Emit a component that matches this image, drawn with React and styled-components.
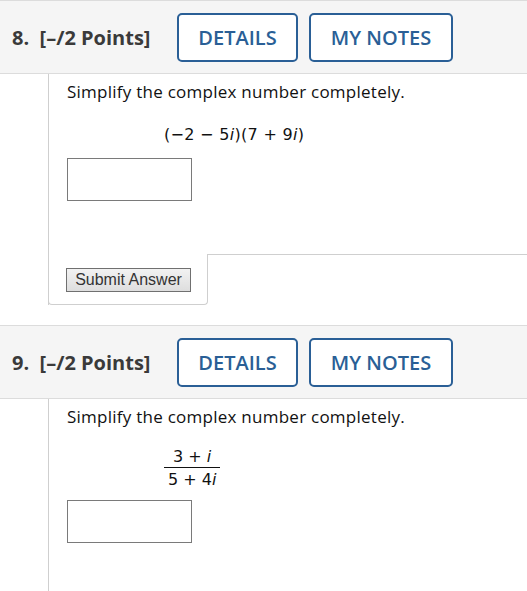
import React from 'react';
import styled, { createGlobalStyle } from 'styled-components';

const GlobalStyle = createGlobalStyle`
  body {
    margin: 0;
    background: #fff;
    font-family: "Open Sans", "Liberation Sans", sans-serif;
    overflow: hidden;
  }
`;

const Page = styled.div`
  width: 527px;
`;

const Question = styled.section`
  margin-bottom: 20px;
`;

const Header = styled.div`
  display: flex;
  align-items: center;
  height: 72px;
  padding-left: 12px;
  background: #f5f5f5;
  border-top: 1px solid #dcdcdc;
  border-bottom: 1px solid #dcdcdc;
`;

const Title = styled.h2`
  width: 165px;
  margin: 0;
  font-size: 20px;
  font-weight: 700;
  color: #3a3a3a;
  white-space: pre;
`;

const HeaderButton = styled.button`
  box-sizing: border-box;
  height: 49px;
  width: ${(props) => props.width}px;
  margin-right: 11px;
  padding: 0;
  background: #fff;
  border: 2px solid #2a5f96;
  border-radius: 5px;
  font-family: "Open Sans", sans-serif;
  font-size: 20px;
  font-weight: 600;
  color: #2a5f96;
`;

const Body = styled.div`
  margin-left: 48px;
  border-left: 1px solid #cfcfcf;
`;

const Content = styled.div`
  padding: 6px 0 0 18px;
`;

const Prompt = styled.p`
  margin: 0;
  font-size: 17px;
  letter-spacing: 0.25px;
  color: #111;
`;

const MathLine = styled.div`
  margin: 22px 0 0 97px;
  font-family: "DejaVu Sans", Verdana, sans-serif;
  font-size: 16px;
  letter-spacing: 0.3px;
  color: #111;
  white-space: pre;
  i {
    font-style: italic;
  }
`;

const Fraction = styled.div`
  display: flex;
  flex-direction: column;
  align-items: center;
  width: fit-content;
  margin: 20px 0 0 97px;
  font-family: "DejaVu Sans", Verdana, sans-serif;
  font-size: 16px;
  line-height: 17px;
  color: #111;
  white-space: pre;
  i {
    font-style: italic;
  }
`;

const Numerator = styled.span`
  align-self: stretch;
  text-align: center;
  padding-bottom: 2px;
  border-bottom: 1px solid #111;
`;

const Denominator = styled.span`
  padding: 3px 4px 0;
`;

const AnswerBox = styled.input`
  display: block;
  box-sizing: border-box;
  width: 125px;
  height: 43px;
  margin-top: ${(props) => props.top}px;
  border: 1px solid #7a7a7a;
  background: #fff;
`;

const SubmitRow = styled.div`
  display: flex;
  margin-top: 53px;
  margin-left: -1px;
`;

const SubmitCell = styled.div`
  box-sizing: border-box;
  width: 160px;
  height: 51px;
  padding: 14px 0 0 17px;
  border-left: 1px solid #cfcfcf;
  border-right: 1px solid #cfcfcf;
  border-bottom: 1px solid #cfcfcf;
  border-radius: 0 0 4px 4px;
`;

const Filler = styled.div`
  flex: 1;
  height: 50px;
  border-top: 1px solid #cfcfcf;
`;

const SubmitButton = styled.button`
  box-sizing: border-box;
  width: 125px;
  height: 24px;
  padding: 0;
  border: 1px solid #707070;
  background: linear-gradient(#f2f2f2, #dedede);
  font-family: "Liberation Sans", Arial, sans-serif;
  font-size: 16px;
  color: #333;
`;

const Tail = styled.div`
  height: 50px;
`;

const QuestionHeader = ({ number }) => (
  <Header>
    <Title>{`${number}.  [–/2 Points]`}</Title>
    <HeaderButton width={121}>DETAILS</HeaderButton>
    <HeaderButton width={144}>MY NOTES</HeaderButton>
  </Header>
);

const App = () => (
  <Page>
    <GlobalStyle />
    <Question>
      <QuestionHeader number={8} />
      <Body>
        <Content>
          <Prompt>Simplify the complex number completely.</Prompt>
          <MathLine>
            (−2 − 5<i>i</i>)(7 + 9<i>i</i>)
          </MathLine>
          <AnswerBox top={14} />
        </Content>
        <SubmitRow>
          <SubmitCell>
            <SubmitButton>Submit Answer</SubmitButton>
          </SubmitCell>
          <Filler />
        </SubmitRow>
      </Body>
    </Question>
    <Question>
      <QuestionHeader number={9} />
      <Body>
        <Content>
          <Prompt>Simplify the complex number completely.</Prompt>
          <Fraction>
            <Numerator>3 + <i>i</i></Numerator>
            <Denominator>5 + 4<i>i</i></Denominator>
          </Fraction>
          <AnswerBox top={12} />
        </Content>
        <Tail />
      </Body>
    </Question>
  </Page>
);

export default App;
